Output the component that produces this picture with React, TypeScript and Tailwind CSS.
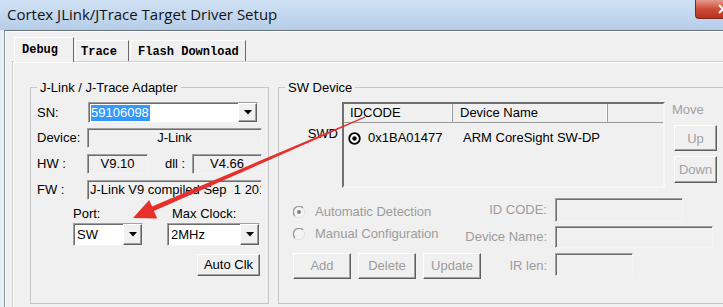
import React from "react";

const sunken =
  "border border-t-[#a0a0a0] border-l-[#a0a0a0] border-r-[#f4f4f4] border-b-[#f4f4f4] shadow-[inset_1px_1px_0_#6d6d6d]";
const raised =
  "border border-t-white border-l-white border-r-[#5f5f5f] border-b-[#5f5f5f] shadow-[inset_-1px_-1px_0_#a0a0a0]";

function DropBtn() {
  return (
    <div className={`${raised} w-[19px] h-full bg-[#f0f0f0] flex items-center justify-center shrink-0`}>
      <svg width="8" height="5" viewBox="0 0 8 5">
        <path d="M0 0 H8 L4 4.5 Z" fill="#000" />
      </svg>
    </div>
  );
}

function RadioDisabled({ checked }: { checked?: boolean }) {
  return (
    <svg width="12" height="12" viewBox="0 0 12 12" className="shrink-0">
      <circle cx="6" cy="6" r="5.3" fill="#f4f4f4" />
      <path d="M10 2 A5.6 5.6 0 0 0 2 10" stroke="#9a9a9a" strokeWidth="1.4" fill="none" />
      <path d="M2 10 A5.6 5.6 0 0 0 10 2" stroke="#e2e2e2" strokeWidth="1" fill="none" />
      {checked && <circle cx="6" cy="6" r="1.9" fill="#7c7c7c" />}
    </svg>
  );
}

function Field({ className, children }: { className: string; children?: React.ReactNode }) {
  return (
    <div className={`${sunken} bg-[#f0f0f0] flex items-center justify-center shrink-0 ${className}`}>
      {children}
    </div>
  );
}

export default function App() {
  return (
    <div className="relative w-[723px] h-[307px] overflow-hidden bg-[#e2eaf3] font-['Liberation_Sans',Arial,sans-serif] text-[13px] text-black">
      {/* title bar */}
      <div className="h-[30px] flex items-start bg-gradient-to-b from-[#d0e1f4] via-[#c3d8ef] to-[#b6cde8]">
        <div className="pl-[7px] pt-[5px] text-[15px] leading-[19px] font-['Open_Sans',sans-serif] text-[#141414]">
          Cortex JLink/JTrace Target Driver Setup
        </div>
        <div className="ml-auto w-[28px] h-[19px] rounded-bl-[4px] border-l border-b border-[#7a2a20] bg-gradient-to-b from-[#e39a8c] via-[#cc4a36] to-[#b8321f] overflow-hidden flex items-center">
          <svg width="10" height="10" viewBox="0 0 10 10" className="ml-[22px] shrink-0">
            <path d="M1 1 L9 9 M9 1 L1 9" stroke="#fff" strokeWidth="2" />
          </svg>
        </div>
      </div>

      <div className="flex h-[277px]">
        <div className="w-[4px] shrink-0 bg-[#e6edf5]" />
        <div className="flex-1 min-w-0 flex flex-col border-l border-t border-l-[#8a97a6] border-t-[#66727f] bg-[#f0f0f0] shadow-[inset_1px_1px_0_#ffffff] pl-[7px] pt-[6px]">
          {/* tabs */}
          <div className="flex items-end h-[24px] pl-[2px] font-['Liberation_Mono',monospace] font-bold text-[12px] leading-[16px]">
            <div className="relative z-10 -mb-px w-[60px] h-[25px] bg-[#f0f0f0] border-t border-l border-r border-t-white border-l-white border-r-[#6a6a6a] pl-[7px] pt-[4px]">
              Debug
            </div>
            <div className="ml-[1px] w-[54px] h-[21px] border-t border-l border-r border-t-white border-l-white border-r-[#6a6a6a] pl-[5px] pt-[3px]">
              Trace
            </div>
            <div className="ml-[1px] w-[116px] h-[21px] border-t border-l border-r border-t-white border-l-white border-r-[#6a6a6a] pl-[7px] pt-[3px]">
              Flash Download
            </div>
          </div>

          {/* panel */}
          <div className="flex-1 min-w-0 flex items-start overflow-hidden border-t border-l border-[#cfcfcf] shadow-[inset_1px_1px_0_#ffffff] pl-[17px] pt-[18px]">
            {/* J-Link group */}
            <fieldset className="w-[239px] h-[224px] shrink-0 border border-[#c6c6c6]">
              <legend className="ml-[6px] px-[3px] leading-[15px]">J-Link / J-Trace Adapter</legend>

              <div className="flex items-center h-[21px] mt-[7px] pl-[6px]">
                <span className="w-[50px]">SN:</span>
                <div className={`${sunken} ml-[1px] w-[170px] h-[21px] bg-white flex items-center`}>
                  <span className="ml-[2px] bg-[#3399ff] text-white leading-[16px] pr-[1px]">59106098</span>
                  <div className="flex-1" />
                  <DropBtn />
                </div>
              </div>

              <div className="flex items-center h-[20px] mt-[5px] pl-[6px]">
                <span className="w-[50px]">Device:</span>
                <Field className="w-[175px] h-[20px]">J-Link</Field>
              </div>

              <div className="flex items-center h-[20px] mt-[6px] pl-[6px]">
                <span className="w-[50px]">HW :</span>
                <Field className="w-[61px] h-[20px]">V9.10</Field>
                <span className="w-[44px] pl-[17px]">dll :</span>
                <Field className="w-[70px] h-[20px]">V4.66</Field>
              </div>

              <div className="flex items-center h-[20px] mt-[6px] pl-[6px]">
                <span className="w-[50px]">FW :</span>
                <div className={`${sunken} w-[175px] h-[20px] bg-[#f0f0f0] flex items-center overflow-hidden whitespace-pre pl-[2px]`}>
                  J-Link V9 compiled Sep  1 2017
                </div>
              </div>

              <div className="flex mt-[6px] leading-[15px]">
                <span className="ml-[42px] w-[99px]">Port:</span>
                <span>Max Clock:</span>
              </div>

              <div className="flex mt-[2px]">
                <div className={`${sunken} ml-[42px] w-[70px] h-[23px] bg-white flex items-center`}>
                  <span className="pl-[3px] flex-1">SW</span>
                  <DropBtn />
                </div>
                <div className={`${sunken} ml-[24px] w-[93px] h-[23px] bg-white flex items-center`}>
                  <span className="pl-[3px] flex-1">2MHz</span>
                  <DropBtn />
                </div>
              </div>

              <div className="flex mt-[8px]">
                <div className={`${raised} ml-[166px] w-[63px] h-[22px] bg-[#f0f0f0] flex items-center justify-center`}>
                  Auto Clk
                </div>
              </div>
            </fieldset>

            {/* SW Device group */}
            <fieldset className="ml-[9px] w-[460px] h-[224px] shrink-0 border border-[#c6c6c6]">
              <legend className="ml-[6px] px-[3px] leading-[15px]">SW Device</legend>

              <div className="flex items-start mt-[7px]">
                <div className="w-[63px] pr-[4px] pt-[24px] text-right leading-[15px]">SWD</div>
                <div className="w-[323px] h-[86px] shrink-0 border-2 border-t-[#707070] border-l-[#707070] border-r-[#f8f8f8] border-b-[#f8f8f8] bg-[#f0f0f0]">
                  <div className="flex h-[19px] border-b border-b-[#9a9a9a] leading-[18px]">
                    <div className="w-[109px] pl-[6px] border-r border-r-[#9a9a9a] shadow-[inset_-1px_0_0_#ffffff]">IDCODE</div>
                    <div className="w-[155px] pl-[7px] border-r border-r-[#9a9a9a] shadow-[inset_-1px_0_0_#ffffff]">Device Name</div>
                    <div className="flex-1" />
                  </div>
                  <div className="flex items-center h-[16px] mt-[7px]">
                    <div className="w-[111px] flex items-center pl-[4px]">
                      <svg width="13" height="13" viewBox="0 0 13 13" className="shrink-0">
                        <circle cx="6.5" cy="6.5" r="5.3" fill="#fff" stroke="#000" strokeWidth="1.8" />
                        <circle cx="6.5" cy="6.5" r="2.2" fill="#000" />
                      </svg>
                      <span className="ml-[7px]">0x1BA01477</span>
                    </div>
                    <span className="pl-[8px]">ARM CoreSight SW-DP</span>
                  </div>
                </div>
                <div className="ml-[7px] w-[45px] flex flex-col text-[#a0a0a0] leading-[15px]">
                  <span>Move</span>
                  <div className={`${raised} ml-[2px] mt-[8px] w-[43px] h-[26px] bg-[#f0f0f0] flex items-center justify-center`}>Up</div>
                  <div className={`${raised} ml-[2px] mt-[5px] w-[43px] h-[27px] bg-[#f0f0f0] flex items-center justify-center`}>Down</div>
                </div>
              </div>

              <div className="pl-[14px] mt-[10px] text-[#9c9c9c]">
                <div className="flex items-center h-[24px]">
                  <div className="w-[254px] flex items-center justify-between">
                    <div className="flex items-center pt-[4px]">
                      <RadioDisabled checked />
                      <span className="ml-[10px]">Automatic Detection</span>
                    </div>
                    <span>ID CODE:</span>
                  </div>
                  <Field className="ml-[8px] w-[128px] h-[24px]" />
                </div>
                <div className="flex items-center h-[22px] mt-[4px]">
                  <div className="w-[254px] flex items-center justify-between">
                    <div className="flex items-center pb-[6px]">
                      <RadioDisabled />
                      <span className="ml-[10px]">Manual Configuration</span>
                    </div>
                    <span>Device Name:</span>
                  </div>
                  <Field className="ml-[8px] w-[158px] h-[22px]" />
                </div>
                <div className="flex items-start h-[26px] mt-[5px]">
                  <div className="w-[254px] h-[26px] flex items-center justify-between">
                    <div className="flex">
                      <div className={`${raised} w-[58px] h-[26px] bg-[#f0f0f0] flex items-center justify-center`}>Add</div>
                      <div className={`${raised} ml-[7px] w-[58px] h-[26px] bg-[#f0f0f0] flex items-center justify-center`}>Delete</div>
                      <div className={`${raised} ml-[7px] w-[58px] h-[26px] bg-[#f0f0f0] flex items-center justify-center`}>Update</div>
                    </div>
                    <span>IR len:</span>
                  </div>
                  <Field className="ml-[8px] w-[78px] h-[23px]" />
                </div>
              </div>
            </fieldset>
          </div>
        </div>
      </div>

      {/* red annotation arrow */}
      <svg className="absolute inset-0 pointer-events-none" width="723" height="307" viewBox="0 0 723 307">
        <polygon points="365.3,117.6 151,212.3 149,207.7 364.7,116.4" fill="#e8302a" />
        <polygon points="133,218 157.2,218.5 149.2,200.1" fill="#e8302a" />
      </svg>
    </div>
  );
}
